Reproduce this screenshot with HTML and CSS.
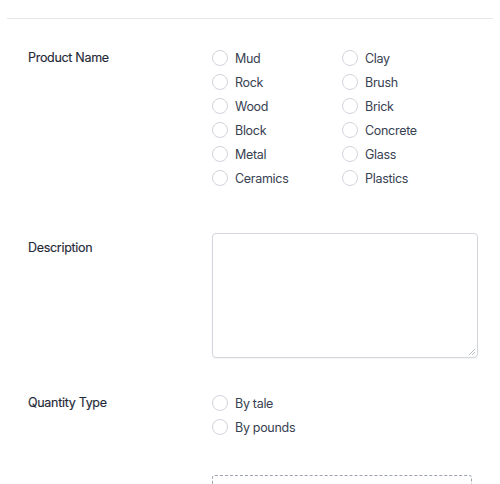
FILE: index.html
```html
<!DOCTYPE html>
<html>
<head>
<meta charset="utf-8">
<link rel="stylesheet" href="styles.css">
</head>
<body>
<div class="page">
  <div class="rule"></div>
  <div class="field field-product">
    <div class="label">Product Name</div>
    <div class="options grid2">
      <label class="opt"><span class="radio"></span>Mud</label>
      <label class="opt"><span class="radio"></span>Clay</label>
      <label class="opt"><span class="radio"></span>Rock</label>
      <label class="opt"><span class="radio"></span>Brush</label>
      <label class="opt"><span class="radio"></span>Wood</label>
      <label class="opt"><span class="radio"></span>Brick</label>
      <label class="opt"><span class="radio"></span>Block</label>
      <label class="opt"><span class="radio"></span>Concrete</label>
      <label class="opt"><span class="radio"></span>Metal</label>
      <label class="opt"><span class="radio"></span>Glass</label>
      <label class="opt"><span class="radio"></span>Ceramics</label>
      <label class="opt"><span class="radio"></span>Plastics</label>
    </div>
  </div>
  <div class="field field-desc">
    <div class="label label-desc">Description</div>
    <div class="textarea"><span class="grip"></span></div>
  </div>
  <div class="field field-qty">
    <div class="label">Quantity Type</div>
    <div class="options">
      <label class="opt"><span class="radio"></span>By tale</label>
      <label class="opt"><span class="radio"></span>By pounds</label>
    </div>
  </div>
  <div class="field field-drop">
    <div class="label"></div>
    <div class="dropzone"></div>
  </div>
</div>
</body>
</html>
```
FILE: styles.css
```css
html, body {
  margin: 0;
  padding: 0;
  background: #ffffff;
}
body {
  font-family: Inter, "Noto Sans", sans-serif;
  font-size: 12.5px;
  letter-spacing: -0.3px;
  color: #2d3748;
  overflow: hidden;
  height: 484px;
}
.page {
  padding: 0 7px;
  height: 484px;
  overflow: hidden;
}
.rule {
  margin-top: 18px;
  height: 1px;
  background: #e5e7eb;
}
.field {
  display: flex;
  padding-left: 21px;
}
.label {
  width: 184px;
  flex: none;
  line-height: 24px;
  color: #1f2937;
  -webkit-text-stroke: 0.15px #1f2937;
}
.field-product { margin-top: 27px; }
.field-desc { margin-top: 43px; }
.field-qty { margin-top: 33px; }
.field-drop { margin-top: 36px; }
.label-desc { padding-top: 3px; }
.options {
  display: flex;
  flex-direction: column;
}
.grid2 {
  display: grid;
  grid-template-columns: 130px 130px;
}
.opt {
  display: flex;
  align-items: center;
  height: 24px;
  color: #374151;
  gap: 7px;
}
.radio {
  width: 14px;
  height: 14px;
  border: 1px solid #d1d5db;
  border-radius: 50%;
  background: #fff;
  flex: none;
}
.textarea {
  position: relative;
  width: 264px;
  height: 123px;
  border: 1px solid #d4d6dd;
  border-radius: 4px;
  background: #fff;
  box-shadow: 0 1px 1px rgba(0, 0, 0, 0.04);
}
.grip {
  position: absolute;
  right: 2px;
  bottom: 2px;
  width: 6px;
  height: 6px;
  background: linear-gradient(135deg, transparent 45%, #b8bcc4 45%, #b8bcc4 55%, transparent 55%, transparent 70%, #b8bcc4 70%, #b8bcc4 80%, transparent 80%);
}
.dropzone {
  width: 258px;
  height: 40px;
  border: 1px dashed #9ca3af;
  border-radius: 3px;
}
```
